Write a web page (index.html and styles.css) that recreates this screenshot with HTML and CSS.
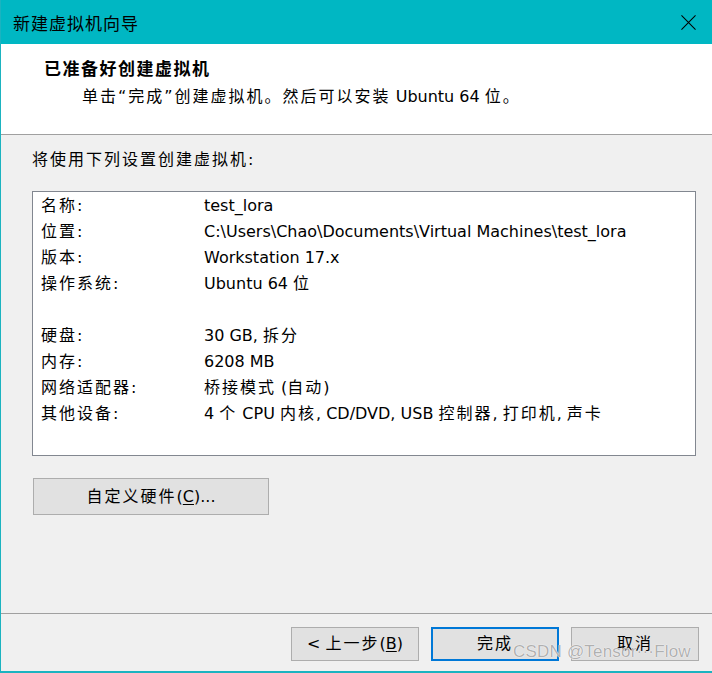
FILE: index.html
```html
<!DOCTYPE html>
<html lang="zh-CN">
<head>
<meta charset="utf-8">
<link rel="stylesheet" href="styles.css">
</head>
<body>
<div class="window">
  <div class="titlebar">
    <span class="title">新建虚拟机向导</span>
    <svg class="close" width="16" height="16" viewBox="0 0 16 16"><path d="M0.5 0.5 L15.5 15.5 M15.5 0.5 L0.5 15.5" stroke="#000" stroke-width="1.1" fill="none"/></svg>
  </div>
  <div class="header">
    <div class="heading">已准备好创建虚拟机</div>
    <div class="subheading"><span class="zh">单击“完成”创建虚拟机。然后可以安装</span> Ubuntu 64 <span class="zh">位。</span></div>
  </div>
  <div class="main">
    <div class="intro">将使用下列设置创建虚拟机:</div>
    <div class="summary">
      <div class="row"><span class="k">名称:</span><span class="v">test_lora</span></div>
      <div class="row"><span class="k">位置:</span><span class="v">C:\Users\Chao\Documents\Virtual Machines\test_lora</span></div>
      <div class="row"><span class="k">版本:</span><span class="v">Workstation 17.x</span></div>
      <div class="row"><span class="k">操作系统:</span><span class="v">Ubuntu 64 <span class="zh">位</span></span></div>
      <div class="row"><span class="k"></span><span class="v"></span></div>
      <div class="row"><span class="k">硬盘:</span><span class="v">30 GB, <span class="zh">拆分</span></span></div>
      <div class="row"><span class="k">内存:</span><span class="v">6208 MB</span></div>
      <div class="row"><span class="k">网络适配器:</span><span class="v"><span class="zh">桥接模式</span> (<span class="zh">自动</span>)</span></div>
      <div class="row"><span class="k">其他设备:</span><span class="v">4 <span class="zh">个</span> CPU <span class="zh">内核</span>, CD/DVD, USB <span class="zh">控制器</span>, <span class="zh">打印机</span>, <span class="zh">声卡</span></span></div>
    </div>
    <div class="btn custom"><span class="zh">自定义硬件</span>(<u>C</u>)...</div>
  </div>
  <div class="footer">
    <div class="btn">&lt; <span class="zh">上一步</span>(<u>B</u>)</div>
    <div class="btn primary"><span class="zh">完成</span></div>
    <div class="btn"><span class="zh">取消</span></div>
    <div class="watermark">CSDN @Tensor···Flow</div>
  </div>
</div>
</body>
</html>
```
FILE: styles.css
```css
* { box-sizing: border-box; }
html, body { margin: 0; padding: 0; }
body {
  width: 712px;
  height: 673px;
  overflow: hidden;
  font-family: "DejaVu Sans", "Noto Sans CJK SC", sans-serif;
  font-size: 16px;
  color: #000;
  background: #f0f0f0;
}
.zh { letter-spacing: 2px; }
.window {
  width: 713px;
  height: 673px;
  border-left: 1px solid #1bb3c0;
  border-bottom: 2px solid #1bb3c0;
  display: flex;
  flex-direction: column;
  position: relative;
}
.titlebar {
  height: 44px;
  flex: none;
  background: #00b7c3;
  display: flex;
  align-items: center;
  justify-content: space-between;
  padding: 0 17px 0 12px;
}
.title {
  font-family: "Noto Sans CJK SC", sans-serif;
  font-size: 17px;
  letter-spacing: 1px;
  line-height: 20px;
  margin-top: 1px;
}
.close { display: block; width: 15px; height: 15px; margin-top: 1px; }
.header {
  height: 91px;
  flex: none;
  background: #fff;
  border-bottom: 1px solid #a0a0a0;
  padding: 12px 0 0 43px;
}
.heading {
  font-family: "Noto Sans CJK SC", sans-serif;
  font-weight: bold;
  font-size: 17px;
  letter-spacing: 1.5px;
  line-height: 24px;
}
.subheading {
  margin: 7px 0 0 38px;
  line-height: 20px;
}
.main {
  flex: none;
  height: 478px;
  padding: 14px 0 0 31px;
}
.intro { line-height: 22px; letter-spacing: 2px; }
.summary {
  margin-top: 20px;
  width: 664px;
  height: 265px;
  background: #fff;
  border: 1px solid #828790;
  padding: 1px 0 0 8px;
}
.row {
  display: grid;
  grid-template-columns: 163px 1fr;
  height: 26px;
  align-items: center;
  white-space: nowrap;
  line-height: 20px;
}
.k { letter-spacing: 2px; }
.btn {
  width: 128px;
  height: 34px;
  background: #e1e1e1;
  border: 1px solid #adadad;
  display: flex;
  align-items: center;
  justify-content: center;
  line-height: 20px;
  white-space: pre;
}
.btn u { text-decoration-thickness: 1px; text-underline-offset: 2px; }
.custom {
  width: 236px;
  height: 37px;
  margin: 22px 0 0 1px;
}
.footer {
  flex: 1;
  border-top: 1px solid #a0a0a0;
  display: flex;
  justify-content: flex-end;
  align-items: flex-start;
  gap: 12px;
  padding: 13px 14px 0 0;
  position: relative;
}
.primary {
  border: 2px solid #0078d7;
}
.watermark {
  position: absolute;
  left: 512px;
  top: 28px;
  font-family: "Liberation Sans", sans-serif;
  font-size: 17px;
  color: rgba(150, 150, 150, 0.75);
  text-shadow: 0 0 1px #fff, 0 0 1px #fff;
  white-space: nowrap;
  letter-spacing: 0.2px;
}
```
